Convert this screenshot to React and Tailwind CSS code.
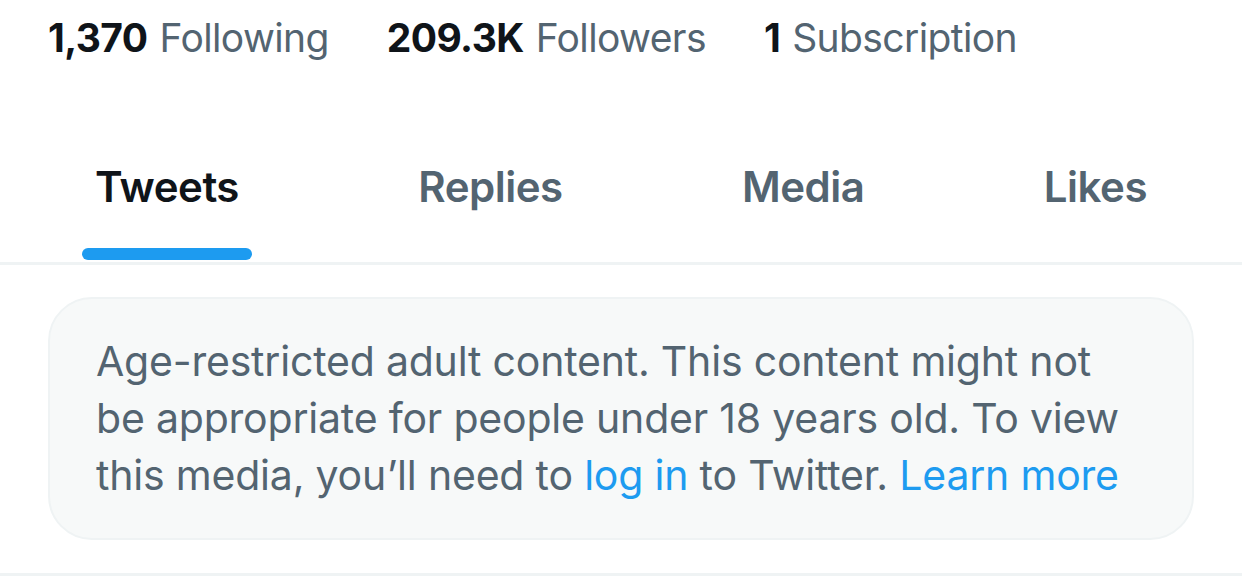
import React from "react";

const stats = [
  { value: "1,370", label: "Following" },
  { value: "209.3K", label: "Followers" },
  { value: "1", label: "Subscription" },
];

const tabs = ["Tweets", "Replies", "Media", "Likes"];

export default function App() {
  return (
    <div
      className="w-[1242px] h-[588px] bg-white overflow-hidden text-[#536471]"
      style={{ fontFamily: "Inter, 'Noto Sans', sans-serif" }}
    >
      {/* follow counts */}
      <div className="flex gap-[58px] pl-[48px] pt-[14px] text-[39px] leading-[48px] tracking-[-0.6px]">
        {stats.map((s) => (
          <div key={s.label} className="flex gap-[12px]">
            <span className="font-bold text-[#0f1419]">{s.value}</span>
            <span>{s.label}</span>
          </div>
        ))}
      </div>

      {/* profile tabs */}
      <div className="mt-[100px] flex justify-between px-[95px] border-b-[3px] border-[#eff3f4]">
        {tabs.map((t, i) => (
          <div key={t} className="relative flex flex-col items-center">
            <span
              className={`text-[42px] leading-[50px] font-semibold tracking-[-0.5px] ${
                i === 0 ? "text-[#0f1419] font-bold" : "text-[#536471]"
              }`}
            >
              {t}
            </span>
            <div
              className={`mt-[36px] mb-[2px] h-[12px] w-[calc(100%+26px)] rounded-full ${
                i === 0 ? "bg-[#1d9bf0]" : "bg-transparent"
              }`}
            />
          </div>
        ))}
      </div>

      {/* sensitive media notice */}
      <div className="pt-[32px] pb-[33px] px-[48px] border-b-[3px] border-[#eff3f4]">
        <div className="rounded-[44px] bg-[#f7f9f9] border-2 border-[#eff3f4] px-[46px] pt-[34px] pb-[34px]">
          <p className="text-[41px] leading-[57px] tracking-[-0.2px] text-[#536471]">
            Age-restricted adult content. This content might not
            <br />
            be appropriate for people under 18 years old. To view
            <br />
            this media, you’ll need to{" "}
            <span className="text-[#1d9bf0]">log in</span> to Twitter.{" "}
            <span className="text-[#1d9bf0]">Learn more</span>
          </p>
        </div>
      </div>
    </div>
  );
}
